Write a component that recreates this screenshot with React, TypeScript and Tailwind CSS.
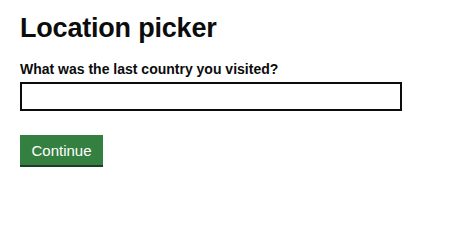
export default function App() {
  return (
    <div className="min-h-screen bg-white px-5 pt-[12px] font-['Liberation_Sans',Arial,sans-serif] text-[#0b0c0c]">
      <h1 className="text-[27px] font-bold leading-[32px] tracking-[-0.2px]">Location picker</h1>
      <label htmlFor="country" className="mt-[15px] block text-[14px] font-bold leading-[20px]">
        What was the last country you visited?
      </label>
      <input
        id="country"
        type="text"
        className="mt-[3px] block h-[29px] w-[382px] border-2 border-[#0b0c0c] bg-white px-1 outline-none"
      />
      <button className="mt-[24px] block h-[30px] w-[83px] bg-[#348040] pt-[1px] text-[15px] leading-[20px] text-white shadow-[0_2px_0_#1f3d25]">
        Continue
      </button>
    </div>
  );
}
